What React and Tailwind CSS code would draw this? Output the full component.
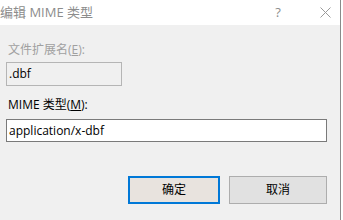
export default function App() {
  return (
    <div className="w-[343px] h-[220px] overflow-hidden bg-white flex font-['Open_Sans','Noto_Sans_CJK_SC',sans-serif] text-[12px]">
      <div className="w-[341px] h-full flex flex-col bg-[#f0f0f0] border-r border-[#8a8a8a]">
        {/* 标题栏 */}
        <div className="h-[25px] bg-white flex items-center shrink-0">
          <span className="flex-1 text-[13px] text-[#8c8c8c] leading-none">编辑 MIME 类型</span>
          <span className="w-[20px] text-center text-[13px] text-[#8c8c8c] leading-none">?</span>
          <span className="w-[26px] ml-[24px] mr-[2px] flex justify-center">
            <svg width="11" height="11" viewBox="0 0 11 11" stroke="#9a9a9a" strokeWidth="1">
              <path d="M0.5 0.5 L10.5 10.5 M10.5 0.5 L0.5 10.5" />
            </svg>
          </span>
        </div>

        <div className="flex flex-col pl-[6px] pr-[13px]">
          <div className="mt-[18px] ml-[2px] h-[14px] leading-[14px] text-[#a0a0a0]">
            文件扩展名(<span className="underline">E</span>):
          </div>
          <div className="mt-[5px] w-[116px] h-[24px] border border-[#b5b5b5] bg-[#f0f0f0] flex items-center pl-[2px] text-black">
            .dbf
          </div>

          <div className="mt-[12px] ml-[2px] h-[14px] leading-[14px] text-black">
            MIME 类型(<span className="underline">M</span>):
          </div>
          <div className="mt-[7px] h-[23px] border border-[#7a7a7a] bg-white flex items-center pl-[2px] text-black">
            application/x-dbf
          </div>

          <div className="mt-[34px] flex justify-end gap-[9px]">
            <button className="w-[92px] h-[28px] border-2 border-[#0078d7] bg-[#e8e3de] text-black">
              确定
            </button>
            <button className="w-[98px] h-[28px] border border-[#adadad] bg-[#e1e1e1] text-black">
              取消
            </button>
          </div>
        </div>
      </div>
    </div>
  );
}
